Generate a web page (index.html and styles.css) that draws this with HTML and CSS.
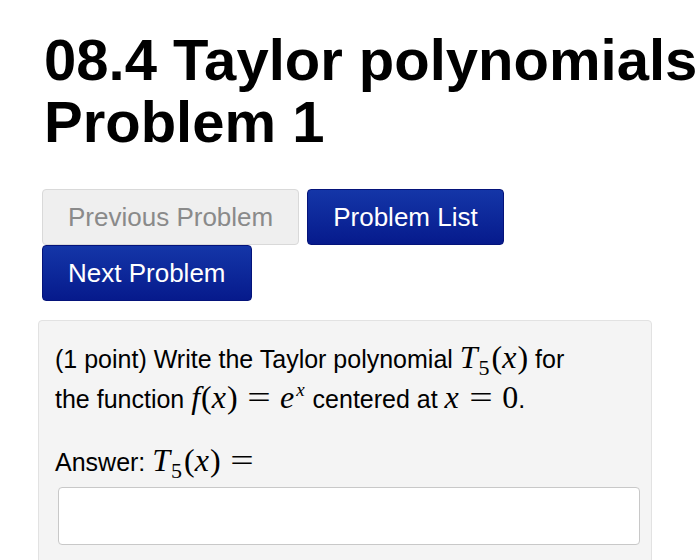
FILE: index.html
```html
<!DOCTYPE html>
<html lang="en">
<head>
  <meta charset="UTF-8">
  <title>08.4 Taylor polynomials Problem 1</title>
  <link rel="stylesheet" href="styles.css">
</head>
<body>
  <div class="page">
    <h1 class="title">08.4 Taylor polynomials<br>Problem 1</h1>

    <div class="nav">
      <button class="btn btn-disabled" disabled>Previous Problem</button>
      <button class="btn btn-primary">Problem List</button>
      <button class="btn btn-primary">Next Problem</button>
    </div>

    <div class="problem">
      <p class="statement">
        (1 point) Write the Taylor polynomial
        <span class="math"><i>T</i><sub>5</sub>(<i>x</i>)</span> for
        the function <span class="math"><i>f</i>(<i>x</i>)<span class="eq">=</span><i>e</i><sup><i>x</i></sup></span>
        centered at <span class="math"><i>x</i><span class="eq">=</span>0</span>.
      </p>
      <p class="answer-label">
        Answer: <span class="math"><i>T</i><sub>5</sub>(<i>x</i>)<span class="eq">=</span></span>
      </p>
      <input type="text" class="answer" title="answer">
    </div>
  </div>
</body>
</html>
```

FILE: styles.css
```css
body {
  margin: 0;
  background: #fff;
  color: #000;
  font-family: "Liberation Sans", Arial, sans-serif;
  overflow: hidden;
}
.page {
  padding: 29px 0 0 44px;
}
.title {
  margin: 0;
  font-size: 58px;
  line-height: 62px;
  font-weight: bold;
  white-space: nowrap;
}
.nav {
  display: flex;
  flex-wrap: wrap;
  width: 480px;
  column-gap: 8px;
  margin-top: 36px;
  margin-left: -2px;
}
.btn {
  font-family: "Liberation Sans", Arial, sans-serif;
  font-size: 26px;
  line-height: 30px;
  padding: 12px 25px;
  border-radius: 4px;
  border: 1px solid;
}
.btn-disabled {
  background: #efefef;
  border-color: #d9d9d9;
  color: #8a8a8a;
}
.btn-primary {
  background: linear-gradient(#1436a8, #061a8c);
  border-color: #04137a;
  color: #fff;
}
.problem {
  margin: 19px 48px 0 -6px;
  background: #f4f4f4;
  border: 1px solid #e2e2e2;
  border-radius: 4px;
  padding: 17px 52px 40px 16px;
}
.statement,
.answer-label {
  margin: 0;
  font-size: 25px;
  line-height: 38px;
}
.answer-label {
  margin-top: 23px;
}
.math {
  font-family: "Liberation Serif", "Times New Roman", serif;
  font-size: 32px;
}
.math i {
  margin-right: 1px;
}
.math sub {
  font-size: 22px;
  vertical-align: -7px;
  line-height: 0;
  margin: 0 2px 0 0;
}
.math sup {
  font-size: 19px;
  vertical-align: 12px;
  line-height: 0;
  margin-left: 1px;
}
.eq {
  margin: 0 0.38em;
  display: inline-block;
  transform: scaleX(1.3);
}
.answer {
  display: block;
  box-sizing: border-box;
  width: 582px;
  height: 58px;
  margin: 6px 0 0 3px;
  background: #fff;
  border: 1px solid #c8c8c8;
  border-radius: 4px;
}
```
